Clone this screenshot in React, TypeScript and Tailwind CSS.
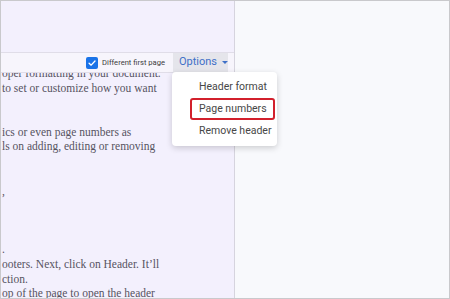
import React from 'react';

const lines = [
  'oper formatting in your document.',
  'to set or customize how you want',
  '',
  '',
  'ics or even page numbers as',
  'ls on adding, editing or removing',
  '',
  '',
  ',',
  '',
  '',
  '',
  '.',
  'ooters. Next, click on Header. It\u2019ll',
  'ction.',
  'op of the page to open the header',
];

const App: React.FC = () => {
  return (
    <div className="relative w-[450px] h-[299px] border border-[#c9c9cc] flex overflow-hidden bg-[#f8f9fc]">
      {/* Document page */}
      <div className="w-[234px] h-full bg-[#f3f0fd] border-r border-[#d6d4de] flex flex-col overflow-hidden">
        <div className="h-[51px] shrink-0" />

        {/* Header toolbar */}
        <div className="relative z-10 h-[21px] shrink-0 bg-[#f7f5fc] border-t border-b border-[#e0dde8] flex items-center justify-end pr-[6px] font-['Roboto',sans-serif]">
          <div className="w-[12px] h-[12px] rounded-[2px] bg-[#1a73e8] flex items-center justify-center mr-[4px]">
            <svg viewBox="0 0 12 12" className="w-[10px] h-[10px]">
              <path d="M2.5 6.2 L5 8.6 L9.6 3.6" fill="none" stroke="white" strokeWidth="1.6" strokeLinecap="round" strokeLinejoin="round" />
            </svg>
          </div>
          <span className="text-[7.6px] text-[#3c3c3c] mr-[8px] whitespace-nowrap">Different first page</span>
          <button className="h-[20px] w-[55px] bg-[#e5e5eb] flex items-center pl-[6px] text-[11px] text-[#3f70c8]">
            Options
            <svg viewBox="0 0 8 4" className="w-[6px] h-[3px] ml-[5px]">
              <path d="M0 0 L8 0 L4 4 Z" fill="#3f70c8" />
            </svg>
          </button>
        </div>

        {/* Body text */}
        <div className="-mt-[7px] font-['Liberation_Serif',serif] text-[11.5px] leading-[14.7px] text-[#56535f] pl-[1px]">
          {lines.map((l, i) => (
            <div key={i} className="h-[14.7px] whitespace-nowrap">{l}</div>
          ))}
        </div>
      </div>

      {/* Options menu */}
      <div className="absolute left-[171px] top-[71px] z-20 w-[105px] h-[74px] bg-white rounded-[4px] shadow-[0_2px_6px_rgba(0,0,0,0.18)] font-['Roboto',sans-serif] text-[10.5px] text-[#474747] flex flex-col pt-[4px]">
        <div className="h-[22px] flex items-center pl-[27px]">Header format</div>
        <div className="h-[22px] ml-[18px] mr-[2px] flex items-center pl-[7px] border-[2.5px] border-[#d2202c] rounded-[3px]">Page numbers</div>
        <div className="h-[22px] flex items-center pl-[27px]">Remove header</div>
      </div>
    </div>
  );
};

export default App;
